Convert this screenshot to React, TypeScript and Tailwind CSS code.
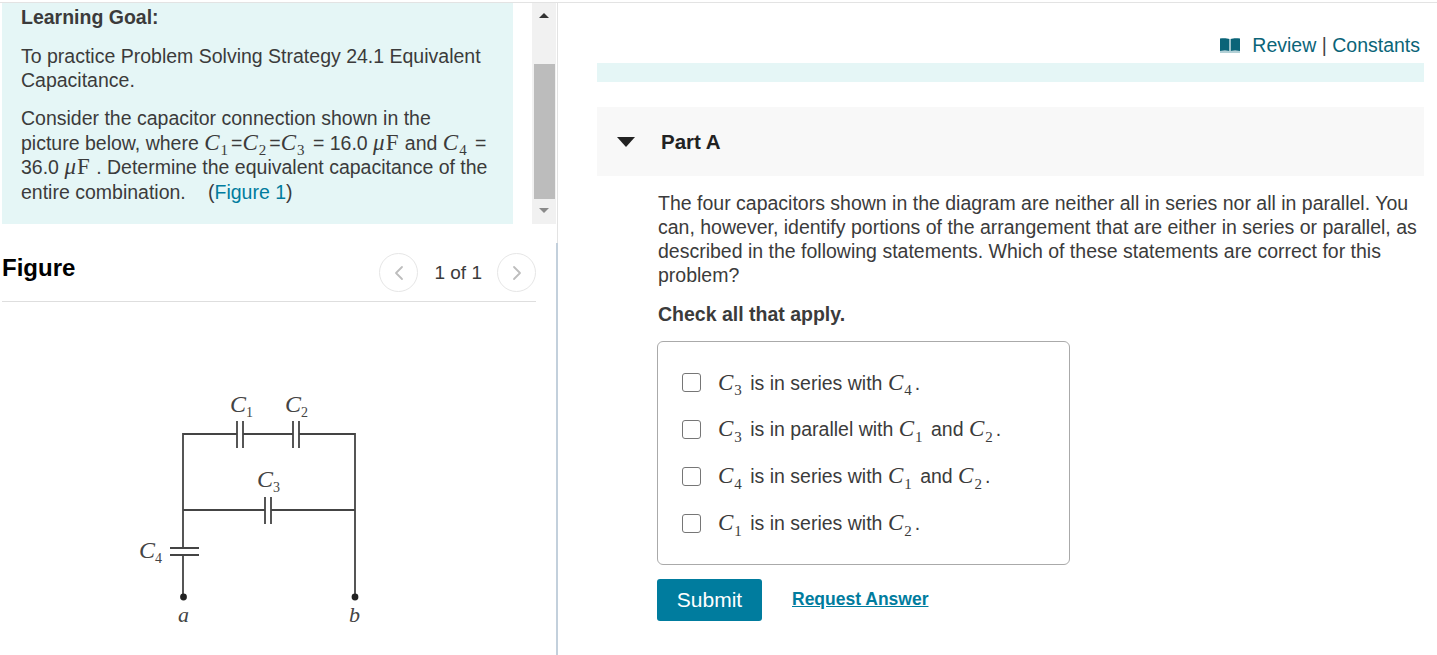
import { ChevronLeft, ChevronRight } from 'lucide-react';

// math symbol with subscript, e.g. C₁
function Cap({ n }: { n: number }) {
  return (
    <span className="whitespace-nowrap pr-[3px] font-['Liberation_Serif',serif] text-[23px] leading-none">
      <i className="pr-[1px]">C</i>
      <sub className="text-[15px] leading-none align-[-2px]">{n}</sub>
    </span>
  );
}

function Micro() {
  return (
    <span className="font-['Liberation_Serif',serif] text-[23px] leading-none tracking-[1px]">
      <i>μ</i>F
    </span>
  );
}

function Circuit() {
  const wire = 'stroke-[#444] stroke-[1.8] fill-none';
  const label = "fill-[#444] font-['Liberation_Serif',serif] italic text-[24px]";
  const sub = "fill-[#444] font-['Liberation_Serif',serif] text-[14px]";
  return (
    <svg width="240" height="250" viewBox="130 385 240 250" className="block">
      <path className={wire} d="M183 597V555M183 548V434H237M243 434H293M299 434H355V597M183 510H265M271 510H355" />
      <path className={wire} d="M237 421V448M243 421V448M293 421V448M299 421V448M265 497V524M271 497V524M170 548H199M170 555H199" />
      <circle cx="183.5" cy="597" r="3.4" className="fill-[#222]" />
      <circle cx="355" cy="597" r="3.4" className="fill-[#222]" />
      <text x="230" y="412" className={label}>C</text>
      <text x="246" y="417" className={sub}>1</text>
      <text x="285" y="412" className={label}>C</text>
      <text x="301" y="417" className={sub}>2</text>
      <text x="257" y="487" className={label}>C</text>
      <text x="273" y="492" className={sub}>3</text>
      <text x="139" y="558" className={label}>C</text>
      <text x="155" y="563" className={sub}>4</text>
      <text x="178" y="622" className="fill-[#444] font-['Liberation_Serif',serif] italic text-[22px]">a</text>
      <text x="349" y="622" className="fill-[#444] font-['Liberation_Serif',serif] italic text-[22px]">b</text>
    </svg>
  );
}

function BookIcon() {
  return (
    <svg width="20" height="15" viewBox="0 0 20 15">
      <path d="M0 0.5C3 0 7 0 9.4 1V13C7 12.2 3 12.2 0 13zM20 0.5C17 0 13 0 10.6 1V13C13 12.2 17 12.2 20 13z" fill="#0b6478" />
      <path d="M0 14H20" stroke="#7fb0bb" strokeWidth="1.2" />
    </svg>
  );
}

function Option({ children }: { children: React.ReactNode }) {
  return (
    <div className="flex h-[46.7px] shrink-0 items-center">
      <span className="h-[19px] w-[19px] shrink-0 rounded-[3px] border border-[#767676] bg-white" />
      <span className="ml-[17px] whitespace-pre">{children}</span>
    </div>
  );
}

export default function App() {
  return (
    <div className="h-[655px] w-[1437px] overflow-hidden bg-white pt-[2px] font-['Liberation_Sans',Arial,sans-serif] text-[19.5px] leading-[24.5px] text-[#3b3b3b]">
      <div className="flex h-[653px] border-t border-[#e3e3e3]">
        <aside className="flex w-[558px] shrink-0 flex-col whitespace-nowrap">
          <div className="flex h-[221px] shrink-0 border-r border-[#e3e3e3]">
            <div className="ml-[2px] w-[511px] bg-[#e5f6f6] px-[19px]">
              <h2 className="font-bold leading-[29px]">Learning Goal:</h2>
              <p className="mt-[12px] leading-[24px]">
                To practice Problem Solving Strategy 24.1 Equivalent
                <br />
                Capacitance.
              </p>
              <p className="mt-[14px]">
                Consider the capacitor connection shown in the
                <br />
                picture below, where <Cap n={1} />=<Cap n={2} />=<Cap n={3} /> = 16.0 <Micro /> and <Cap n={4} /> =
                <br />
                36.0 <Micro /> . Determine the equivalent capacitance of the
                <br />
                entire combination. &nbsp;&nbsp;<span className="pl-[6px]">(</span><span className="text-[#007c9e]">Figure 1</span>)
              </p>
            </div>
            <div className="ml-auto mr-[1px] flex w-[24px] flex-col items-center bg-[#f1f1f1]">
              <span className="mt-[10px] h-0 w-0 border-x-[5px] border-b-[5px] border-x-transparent border-b-[#333]" />
              <span className="mt-[46px] h-[135px] w-[21px] bg-[#bcbcbc]" />
              <span className="mt-[9px] h-0 w-0 border-x-[5px] border-t-[5px] border-x-transparent border-t-[#8a8a8a]" />
            </div>
          </div>
          <div className="h-[19px] shrink-0 border-r border-[#e3e3e3]" />
          <div className="flex min-h-0 flex-1 flex-col border-r-2 border-[#c3d0dc]">
            <div className="ml-[2px] mr-[20px] flex h-[59px] shrink-0 items-start justify-between border-b border-[#dedede]">
              <h3 className="mt-[9px] text-[24px] font-bold leading-[32px] text-black">Figure</h3>
              <div className="mt-[10px] flex items-center">
                <span className="flex h-[39px] w-[39px] items-center justify-center rounded-full border border-[#e6e6e6] text-[#bdbdbd]">
                  <ChevronLeft size={24} strokeWidth={1.8} />
                </span>
                <span className="ml-[16px] mr-[15px] pt-[2px] text-[19px]">1 of 1</span>
                <span className="flex h-[39px] w-[39px] items-center justify-center rounded-full border border-[#e6e6e6] text-[#bdbdbd]">
                  <ChevronRight size={24} strokeWidth={1.8} />
                </span>
              </div>
            </div>
            <div className="ml-[130px] mt-[83px]">
              <Circuit />
            </div>
          </div>
        </aside>

        <main className="flex min-w-0 flex-1 flex-col pl-[39px] pr-[13px]">
          <div className="mt-[30px] flex shrink-0 items-center justify-end pr-[4px] leading-[24px] text-[#0b6478]">
            <BookIcon />
            <span className="ml-[12px]">
              Review <span className="text-[#444]">|</span> Constants
            </span>
          </div>
          <div className="mt-[6px] h-[19px] shrink-0 bg-[#e5f6f6]" />
          <div className="mt-[25px] flex h-[69px] shrink-0 items-center bg-[#f8f8f8] pl-[20px]">
            <span className="h-0 w-0 border-x-[9px] border-t-[10px] border-x-transparent border-t-[#222]" />
            <h3 className="ml-[26px] pt-[2px] text-[20.5px] font-bold text-[#222]">Part A</h3>
          </div>
          <div className="whitespace-nowrap pl-[61px]">
            <p className="mt-[15px] leading-[24px]">
              The four capacitors shown in the diagram are neither all in series nor all in parallel. You
              <br />
              can, however, identify portions of the arrangement that are either in series or parallel, as
              <br />
              described in the following statements. Which of these statements are correct for this
              <br />
              problem?
            </p>
            <p className="mt-[15px] font-bold leading-[24px]">Check all that apply.</p>
            <div className="-ml-px mt-[15px] flex h-[224px] w-[413px] flex-col justify-center rounded-[6px] border border-[#aaaaaa] pl-[24px]">
              <Option>
                <Cap n={3} /> is in series with <Cap n={4} />.
              </Option>
              <Option>
                <Cap n={3} /> is in parallel with <Cap n={1} /> and <Cap n={2} />.
              </Option>
              <Option>
                <Cap n={4} /> is in series with <Cap n={1} /> and <Cap n={2} />.
              </Option>
              <Option>
                <Cap n={1} /> is in series with <Cap n={2} />.
              </Option>
            </div>
            <div className="-ml-px mt-[14px] flex items-center">
              <button className="h-[42px] w-[105px] rounded-[3px] bg-[#007c9e] text-[21px] text-white">Submit</button>
              <a className="mb-[2px] ml-[30px] text-[17.5px] font-bold text-[#007c9e] underline">Request Answer</a>
            </div>
          </div>
        </main>
      </div>
    </div>
  );
}
